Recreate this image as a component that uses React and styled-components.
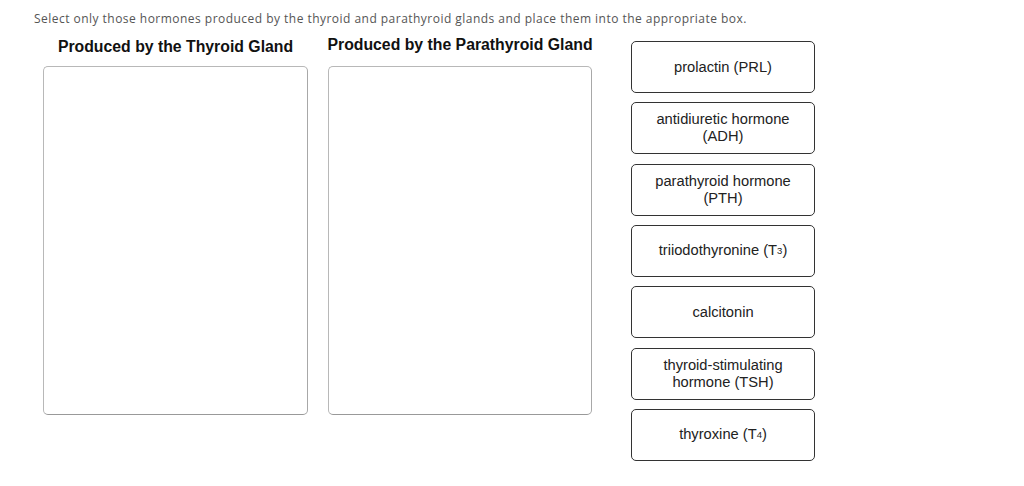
import React from "react"
import styled, { createGlobalStyle } from "styled-components"

const GlobalStyle = createGlobalStyle`
  body {
    margin: 0;
    background: #fff;
  }
`

const Page = styled.div`
  width: 1024px;
  height: 486px;
  padding: 11px 0 0 34px;
  box-sizing: border-box;
`

const Instruction = styled.p`
  margin: 0;
  font-family: "Open Sans", sans-serif;
  font-size: 12px;
  line-height: 15px;
  letter-spacing: 0.47px;
  color: #555;
`

const Board = styled.div`
  display: flex;
  align-items: flex-start;
  padding-left: 9px;
`

const DropColumn = styled.div`
  display: flex;
  flex-direction: column;
  align-items: center;
  width: ${(p) => p.$width}px;
  margin-right: ${(p) => p.$gap}px;
`

const ColumnTitle = styled.h3`
  margin: 0;
  height: 40px;
  padding-top: ${(p) => p.$top}px;
  box-sizing: border-box;
  font-family: "Liberation Sans", Arial, sans-serif;
  font-size: 15.8px;
  line-height: 18px;
  font-weight: bold;
  color: #111;
  white-space: nowrap;
`

const DropZone = styled.div`
  width: 100%;
  height: 349px;
  box-sizing: border-box;
  border: 1px solid #b8b8b8;
  border-bottom-color: #999;
  border-right-color: #a8a8a8;
  border-radius: 5px;
  background: #fff;
`

const Bank = styled.div`
  display: flex;
  flex-direction: column;
  gap: 9.33px;
  margin-top: 15px;
`

const Chip = styled.div`
  display: flex;
  align-items: center;
  justify-content: center;
  width: 184px;
  height: 52px;
  box-sizing: border-box;
  padding: 0 10px;
  border: 1px solid #333;
  border-radius: 5px;
  background: #fff;
  font-family: "Liberation Sans", Arial, sans-serif;
  font-size: 14.7px;
  line-height: 17px;
  color: #222;
  text-align: center;
`

const Sub = styled.span`
  font-size: 9.5px;
`

const chips = [
  "prolactin (PRL)",
  <>antidiuretic hormone<br />(ADH)</>,
  <>parathyroid hormone<br />(PTH)</>,
  <>triiodothyronine (T<Sub>3</Sub>)</>,
  "calcitonin",
  <>thyroid-stimulating<br />hormone (TSH)</>,
  <>thyroxine (T<Sub>4</Sub>)</>,
]

const App = () => (
  <Page>
    <GlobalStyle />
    <Instruction>
      Select only those hormones produced by the thyroid and parathyroid glands and place them into the appropriate box.
    </Instruction>
    <Board>
      <DropColumn $width={265} $gap={20}>
        <ColumnTitle $top={12}>Produced by the Thyroid Gland</ColumnTitle>
        <DropZone />
      </DropColumn>
      <DropColumn $width={264} $gap={39}>
        <ColumnTitle $top={10}>Produced by the Parathyroid Gland</ColumnTitle>
        <DropZone />
      </DropColumn>
      <Bank>
        {chips.map((c, i) => (
          <Chip key={i}>{c}</Chip>
        ))}
      </Bank>
    </Board>
  </Page>
)

export default App
